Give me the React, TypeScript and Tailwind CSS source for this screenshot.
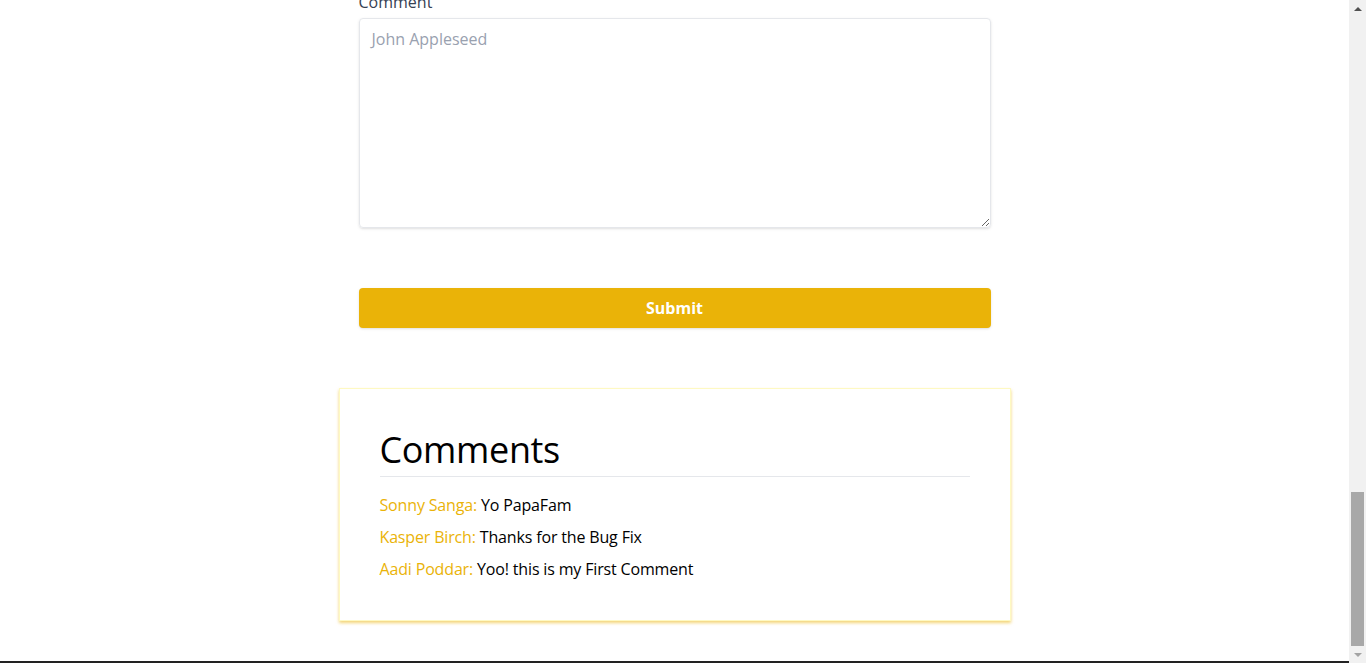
import React from 'react';

const comments = [
  { name: 'Sonny Sanga', text: 'Yo PapaFam' },
  { name: 'Kasper Birch', text: 'Thanks for the Bug Fix' },
  { name: 'Aadi Poddar', text: 'Yoo! this is my First Comment' },
];

export default function App() {
  return (
    <div
      className="flex h-[663px] w-full overflow-hidden bg-white"
      style={{ fontFamily: '"Segoe UI", "Open Sans", sans-serif' }}
    >
      <div className="flex flex-1 flex-col overflow-hidden">
        <div className="flex flex-1 flex-col items-center">
          {/* form */}
          <form className="-mt-[10px] flex w-[632px] flex-col" onSubmit={(e) => e.preventDefault()}>
            <label className="mb-1 text-base leading-6 text-gray-700">Comment</label>
            <textarea
              placeholder="John Appleseed"
              className="h-[210px] w-full rounded border border-gray-200 px-3 py-2 text-base text-gray-700 shadow-sm outline-none placeholder:text-gray-400"
            />
            <button
              type="submit"
              className="mt-[60px] h-10 w-full rounded bg-[#eab308] text-base font-bold text-white shadow-sm"
            >
              Submit
            </button>
          </form>

          {/* comments list */}
          <div className="mt-[60px] w-[672px] border border-yellow-100 bg-white px-10 pt-[39px] pb-[39px] shadow-[0_2px_3px_rgba(234,179,8,0.55)]">
            <h2 className="mb-4 border-b border-gray-200 pt-[2px] pb-[6px] text-4xl leading-10 tracking-[-0.01em] text-black">Comments</h2>
            <ul className="flex flex-col gap-2">
              {comments.map((c) => (
                <li key={c.name} className="text-base leading-6 tracking-[-0.01em] text-black">
                  <span className="text-[#eab308]">{c.name}:</span> {c.text}
                </li>
              ))}
            </ul>
          </div>
        </div>
        <div className="h-[2px] w-full bg-[#222]" />
      </div>

      {/* scrollbar */}
      <div className="flex w-[17px] flex-col bg-[#f1f1f1]">
        <div className="flex h-[17px] items-center justify-center">
          <div className="h-0 w-0 border-x-[4px] border-b-[4px] border-x-transparent border-b-[#505050]" />
        </div>
        <div className="flex-1" />
        <div className="mx-[2px] h-[154px] bg-[#a8a8a8]" />
        <div className="flex h-[17px] items-center justify-center">
          <div className="h-0 w-0 border-x-[4px] border-t-[4px] border-x-transparent border-t-[#a3a3a3]" />
        </div>
      </div>
    </div>
  );
}
